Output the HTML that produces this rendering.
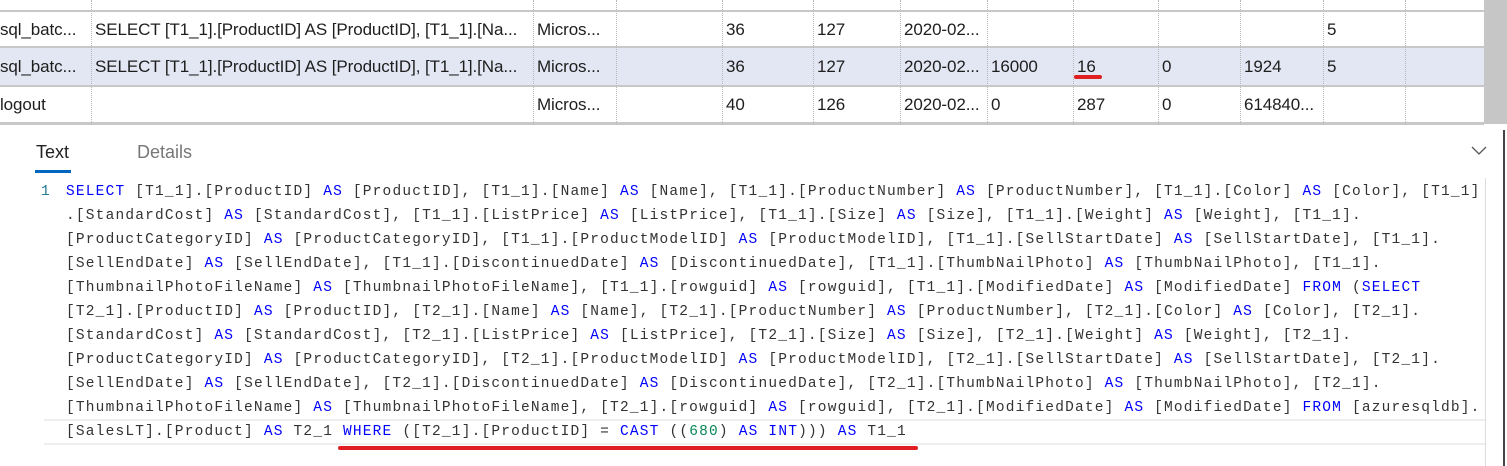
<!DOCTYPE html>
<html><head><meta charset="utf-8"><style>
*{margin:0;padding:0;box-sizing:border-box}
body{width:1507px;height:466px;background:#fff;position:relative;overflow:hidden;font-family:"Liberation Sans",sans-serif;color:#1e1e1e}
.hl{position:absolute;height:2px;background:#c8c8c8;left:0;width:1484px}
.row{position:absolute;left:0;width:1484px;height:37px}
.c{position:absolute;top:0;height:37px;line-height:37px;font-size:17px;white-space:nowrap;padding-left:4px;letter-spacing:-0.1px}
.v{position:absolute;top:0;height:124px;border-left:1px dotted #b8b8b8}
#code{position:absolute;left:66px;top:180px;font-family:"Liberation Mono",monospace;font-size:14.5px;letter-spacing:1.19px;white-space:pre;line-height:24px;color:#333}
.k{color:#0000ff}.n{color:#098658}
</style></head><body>
<div style="position:absolute;left:1484px;top:0;width:23px;height:124px;background:#c6c6c6"></div>
<div class="row" style="top:48px;background:#e3e6f3"></div>
<div class="hl" style="top:10px"></div>
<div class="hl" style="top:46px"></div>
<div class="hl" style="top:85px"></div>
<div class="hl" style="top:122px;height:3px"></div>
<div class="v" style="left:91px"></div><div class="v" style="left:533px"></div><div class="v" style="left:616px"></div><div class="v" style="left:722px"></div><div class="v" style="left:813px"></div><div class="v" style="left:900px"></div><div class="v" style="left:987px"></div><div class="v" style="left:1073px"></div><div class="v" style="left:1158px"></div><div class="v" style="left:1240px"></div><div class="v" style="left:1323px"></div><div class="v" style="left:1405px"></div>

<div class="row" style="top:11px">
<div class="c" style="left:-4px">sql_batc...</div><div class="c" style="left:91px">SELECT [T1_1].[ProductID] AS [ProductID], [T1_1].[Na...</div><div class="c" style="left:533px">Micros...</div><div class="c" style="left:722px">36</div><div class="c" style="left:813px">127</div><div class="c" style="left:900px">2020-02...</div><div class="c" style="left:1323px">5</div></div>
<div class="row" style="top:48px">
<div class="c" style="left:-4px">sql_batc...</div><div class="c" style="left:91px">SELECT [T1_1].[ProductID] AS [ProductID], [T1_1].[Na...</div><div class="c" style="left:533px">Micros...</div><div class="c" style="left:722px">36</div><div class="c" style="left:813px">127</div><div class="c" style="left:900px">2020-02...</div><div class="c" style="left:987px">16000</div><div class="c" style="left:1073px">16</div><div class="c" style="left:1158px">0</div><div class="c" style="left:1240px">1924</div><div class="c" style="left:1323px">5</div></div>
<div style="position:absolute;left:1074px;top:75px;width:28px;height:4px;border-radius:2px;background:#e02020"></div>
<div class="row" style="top:86px">
<div class="c" style="left:-4px">logout</div><div class="c" style="left:533px">Micros...</div><div class="c" style="left:722px">40</div><div class="c" style="left:813px">126</div><div class="c" style="left:900px">2020-02...</div><div class="c" style="left:987px">0</div><div class="c" style="left:1073px">287</div><div class="c" style="left:1158px">0</div><div class="c" style="left:1240px">614840...</div></div>

<div style="position:absolute;left:36px;top:142px;font-size:18px;color:#222">Text</div>
<div style="position:absolute;left:35px;top:170px;width:36px;height:3px;background:#0067c0"></div>
<div style="position:absolute;left:137px;top:142px;font-size:18px;color:#777">Details</div>
<svg style="position:absolute;left:1470px;top:144px" width="18" height="12"><path d="M2 3 L9 10 L16 3" fill="none" stroke="#555" stroke-width="1.3"/></svg>

<div style="position:absolute;left:1485px;top:178px;width:1px;height:288px;background:#ddd"></div>
<div style="position:absolute;left:1503px;top:130px;width:2px;height:336px;background:#444"></div>
<div style="position:absolute;left:44px;top:419px;width:1441px;height:26px;border-top:2px solid #eee;border-bottom:2px solid #eee"></div>
<div style="position:absolute;left:41px;top:180px;font-family:'Liberation Mono',monospace;font-size:14.5px;line-height:24px;color:#237893">1</div>
<div id="code"><span class="k">SELECT</span> [T1_1].[ProductID] <span class="k">AS</span> [ProductID], [T1_1].[Name] <span class="k">AS</span> [Name], [T1_1].[ProductNumber] <span class="k">AS</span> [ProductNumber], [T1_1].[Color] <span class="k">AS</span> [Color], [T1_1]
.[StandardCost] <span class="k">AS</span> [StandardCost], [T1_1].[ListPrice] <span class="k">AS</span> [ListPrice], [T1_1].[Size] <span class="k">AS</span> [Size], [T1_1].[Weight] <span class="k">AS</span> [Weight], [T1_1].
[ProductCategoryID] <span class="k">AS</span> [ProductCategoryID], [T1_1].[ProductModelID] <span class="k">AS</span> [ProductModelID], [T1_1].[SellStartDate] <span class="k">AS</span> [SellStartDate], [T1_1].
[SellEndDate] <span class="k">AS</span> [SellEndDate], [T1_1].[DiscontinuedDate] <span class="k">AS</span> [DiscontinuedDate], [T1_1].[ThumbNailPhoto] <span class="k">AS</span> [ThumbNailPhoto], [T1_1].
[ThumbnailPhotoFileName] <span class="k">AS</span> [ThumbnailPhotoFileName], [T1_1].[rowguid] <span class="k">AS</span> [rowguid], [T1_1].[ModifiedDate] <span class="k">AS</span> [ModifiedDate] <span class="k">FROM</span> (<span class="k">SELECT</span>
[T2_1].[ProductID] <span class="k">AS</span> [ProductID], [T2_1].[Name] <span class="k">AS</span> [Name], [T2_1].[ProductNumber] <span class="k">AS</span> [ProductNumber], [T2_1].[Color] <span class="k">AS</span> [Color], [T2_1].
[StandardCost] <span class="k">AS</span> [StandardCost], [T2_1].[ListPrice] <span class="k">AS</span> [ListPrice], [T2_1].[Size] <span class="k">AS</span> [Size], [T2_1].[Weight] <span class="k">AS</span> [Weight], [T2_1].
[ProductCategoryID] <span class="k">AS</span> [ProductCategoryID], [T2_1].[ProductModelID] <span class="k">AS</span> [ProductModelID], [T2_1].[SellStartDate] <span class="k">AS</span> [SellStartDate], [T2_1].
[SellEndDate] <span class="k">AS</span> [SellEndDate], [T2_1].[DiscontinuedDate] <span class="k">AS</span> [DiscontinuedDate], [T2_1].[ThumbNailPhoto] <span class="k">AS</span> [ThumbNailPhoto], [T2_1].
[ThumbnailPhotoFileName] <span class="k">AS</span> [ThumbnailPhotoFileName], [T2_1].[rowguid] <span class="k">AS</span> [rowguid], [T2_1].[ModifiedDate] <span class="k">AS</span> [ModifiedDate] <span class="k">FROM</span> [azuresqldb].
[SalesLT].[Product] <span class="k">AS</span> T2_1 <span class="k">WHERE</span> ([T2_1].[ProductID] = <span class="k">CAST</span> ((<span class="n">680</span>) <span class="k">AS</span> <span class="k">INT</span>))) <span class="k">AS</span> T1_1</div>
<div style="position:absolute;left:338px;top:446px;width:580px;height:4px;border-radius:2px;background:#e02020"></div>
</body></html>
